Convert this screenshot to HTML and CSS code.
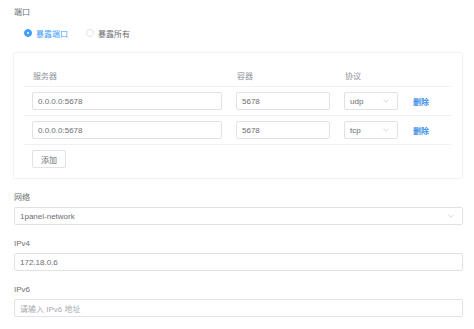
FILE: index.html
```html
<!DOCTYPE html>
<html>
<head>
<meta charset="utf-8">
<link rel="stylesheet" href="styles.css">
</head>
<body>
<div class="form">
  <div class="label">端口</div>
  <div class="radios">
    <span class="radio checked"><span class="dot"></span><span class="rtext">暴露端口</span></span>
    <span class="radio"><span class="dot"></span><span class="rtext">暴露所有</span></span>
  </div>
  <div class="card">
    <div class="row head">
      <div class="cell">服务器</div>
      <div class="cell">容器</div>
      <div class="cell">协议</div>
      <div class="cell"></div>
    </div>
    <div class="row">
      <div class="cell"><div class="input w1">0.0.0.0:5678</div></div>
      <div class="cell"><div class="input w2">5678</div></div>
      <div class="cell"><div class="input select w3"><span>udp</span><svg class="chev" viewBox="0 0 10 6"><path d="M1 1l4 4 4-4" fill="none" stroke="#b8bbc2" stroke-width="1"/></svg></div></div>
      <div class="cell"><span class="del">删除</span></div>
    </div>
    <div class="row">
      <div class="cell"><div class="input w1">0.0.0.0:5678</div></div>
      <div class="cell"><div class="input w2">5678</div></div>
      <div class="cell"><div class="input select w3"><span>tcp</span><svg class="chev" viewBox="0 0 10 6"><path d="M1 1l4 4 4-4" fill="none" stroke="#b8bbc2" stroke-width="1"/></svg></div></div>
      <div class="cell"><span class="del">删除</span></div>
    </div>
    <div class="btn">添加</div>
  </div>
  <div class="item">
    <div class="label">网络</div>
    <div class="input select full"><span>1panel-network</span><svg class="chev" viewBox="0 0 10 6"><path d="M1 1l4 4 4-4" fill="none" stroke="#b8bbc2" stroke-width="1"/></svg></div>
  </div>
  <div class="item">
    <div class="label">IPv4</div>
    <div class="input full">172.18.0.6</div>
  </div>
  <div class="item">
    <div class="label">IPv6</div>
    <div class="input full placeholder">请输入 IPv6 地址</div>
  </div>
</div>
</body>
</html>
```
FILE: styles.css
```css
html, body {
  margin: 0;
  padding: 0;
  background: #ffffff;
}
body {
  font-family: "Liberation Sans", "Noto Sans CJK SC", sans-serif;
  font-size: 8px;
  color: #6b6e73;
}
.form {
  padding: 4px 11px 0 14px;
  display: flex;
  flex-direction: column;
}
.label {
  height: 18px;
  line-height: 18px;
  color: #6b6e73;
}
.radios {
  height: 18px;
  display: flex;
  align-items: center;
  padding-left: 10px;
  margin-top: 2px;
  gap: 18px;
}
.radio {
  display: flex;
  align-items: center;
  gap: 4px;
  color: #6b6e73;
}
.radio .dot {
  width: 6px;
  height: 6px;
  border: 1px solid #e2e4ea;
  border-radius: 50%;
  box-sizing: content-box;
  background: #fff;
  position: relative;
}
.radio.checked .dot {
  background: #409eff;
  border-color: #409eff;
}
.radio.checked .dot::after {
  content: "";
  position: absolute;
  left: 2px;
  top: 2px;
  width: 2px;
  height: 2px;
  border-radius: 50%;
  background: #fff;
}
.radio.checked .rtext {
  color: #409eff;
}
.card {
  margin-top: 10px;
  margin-left: -1px;
  border: 1px solid #f1f2f5;
  border-radius: 2px;
  padding: 11px 11px 10px 10px;
  box-shadow: 0 0 3px rgba(0,0,0,0.02);
}
.row {
  display: grid;
  grid-template-columns: 204px 108px 69px 47px;
  border-bottom: 1px solid #eef0f4;
  height: 28px;
  align-items: center;
}
.row.head {
  height: 22px;
  color: #909399;
}
.cell {
  padding-left: 8px;
  display: flex;
  align-items: center;
}
.row.head .cell {
  padding-left: 9px;
}
.input {
  height: 18px;
  box-sizing: border-box;
  border: 1px solid #e0e2e8;
  border-radius: 2px;
  padding-left: 5px;
  display: flex;
  align-items: center;
  color: #6b6e73;
  background: #fff;
}
.w1 { width: 190px; }
.w2 { width: 94px; }
.w3 { width: 54px; }
.select {
  justify-content: space-between;
  padding-right: 8px;
}
.chev {
  width: 6px;
  height: 4px;
}
.del {
  color: #3a8ee6;
  font-weight: 600;
}
.btn {
  margin-top: 5px;
  margin-left: 8px;
  width: 34px;
  height: 18px;
  box-sizing: border-box;
  border: 1px solid #e0e2e8;
  border-radius: 2px;
  display: flex;
  align-items: center;
  justify-content: center;
  color: #6b6e73;
}
.item {
  display: flex;
  flex-direction: column;
}
.card + .item {
  margin-top: 10px;
}
.item + .item {
  margin-top: 10px;
}
.full {
  width: 449px;
}
.placeholder {
  color: #a8abb2;
}
```
